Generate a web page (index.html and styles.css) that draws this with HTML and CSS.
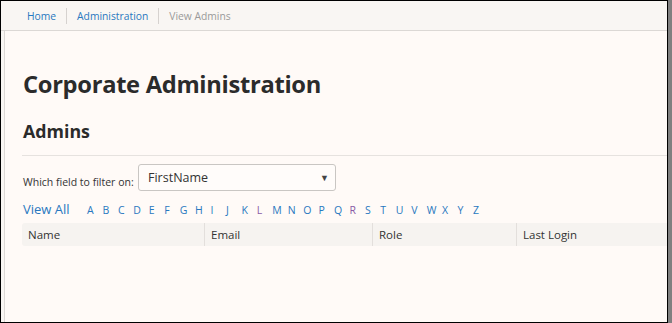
FILE: index.html
```html
<!DOCTYPE html>
<html lang="en">
<head>
    <meta charset="UTF-8">
    <title>View Admins</title>
    <link rel="stylesheet" href="styles.css">
</head>
<body>
    <div class="window">
        <div class="breadcrumb">
            <a href="#" class="crumb">Home</a>
            <a href="#" class="crumb">Administration</a>
            <span class="crumb current">View Admins</span>
        </div>
        <div class="content">
            <h1>Corporate Administration</h1>
            <h2>Admins</h2>
            <hr>
            <div class="filter-row">
                <label for="filterField">Which field to filter on:</label>
                <div class="select-box">
                    <span>FirstName</span>
                    <span class="arrow">&#9660;</span>
                </div>
            </div>
            <div class="letters">
                <a href="#" class="view-all">View All</a>
                <a href="#">A</a><a href="#">B</a><a href="#">C</a><a href="#">D</a><a href="#">E</a><a href="#">F</a><a href="#">G</a><a href="#">H</a><a href="#">I</a><a href="#">J</a><a href="#">K</a><a href="#" class="visited">L</a><a href="#">M</a><a href="#">N</a><a href="#">O</a><a href="#">P</a><a href="#">Q</a><a href="#" class="visited">R</a><a href="#">S</a><a href="#">T</a><a href="#">U</a><a href="#">V</a><a href="#">W</a><a href="#">X</a><a href="#">Y</a><a href="#">Z</a>
            </div>
            <div class="table-head">
                <div class="col col-name">Name</div>
                <div class="col col-email">Email</div>
                <div class="col col-role">Role</div>
                <div class="col col-login">Last Login</div>
            </div>
        </div>
    </div>
</body>
</html>
```

FILE: styles.css
```css
html, body {
    margin: 0;
    padding: 0;
}
body {
    background-color: #808080;
    font-family: 'Open Sans', sans-serif;
    color: #333;
}
.window {
    width: 666px;
    height: 321px;
    border: 1px solid #000;
    background-color: #f9f6f3;
    display: flex;
    flex-direction: column;
    overflow: hidden;
}
.breadcrumb {
    height: 29px;
    border-bottom: 1px solid #dcd8d5;
    display: flex;
    align-items: center;
    padding-left: 16px;
    font-size: 10.3px;
}
.crumb {
    padding: 0 10px;
    line-height: 16px;
    border-left: 1px solid #d6d2cf;
    color: #2878c0;
    text-decoration: none;
}
.crumb:first-child {
    border-left: none;
}
.crumb.current {
    color: #9a9a9a;
}
.content {
    flex: 1;
    margin-left: 3px;
    border-left: 1px solid #dcd8d5;
    background-color: #fffaf7;
    padding: 0 0 0 18px;
}
h1 {
    margin: 38px 0 0;
    font-size: 23.7px;
    font-weight: bold;
    letter-spacing: -0.3px;
    line-height: 30px;
    color: #2b2b2b;
}
h2 {
    margin: 21px 0 0;
    font-size: 17.8px;
    font-weight: bold;
    line-height: 22px;
    color: #2b2b2b;
}
hr {
    margin: 13px 0 0 -1px;
    border: none;
    border-top: 1px solid #e6e2df;
}
.filter-row {
    display: flex;
    align-items: center;
    margin-top: 8px;
    font-size: 10.5px;
}
.filter-row label {
    margin-top: 8px;
    width: 115px;
}
.select-box {
    width: 181px;
    height: 25px;
    border: 1px solid #c9c6c3;
    border-radius: 3px;
    background-color: #fffcfa;
    display: flex;
    align-items: center;
    justify-content: space-between;
    padding: 0 6px 0 9px;
    font-size: 12.5px;
}
.arrow {
    font-size: 9px;
    color: #444;
}
.letters {
    display: flex;
    align-items: baseline;
    margin-top: 9px;
    height: 20px;
}
.letters a {
    color: #2878c0;
    text-decoration: none;
    font-size: 10.5px;
    width: 15.45px;
}
.letters a.visited {
    color: #8a5aa6;
}
.letters a.view-all {
    font-size: 13px;
    width: 64px;
}
.table-head {
    display: flex;
    height: 23px;
    margin-top: 3px;
    margin-left: -1px;
    background-color: #f6f3f0;
    border-radius: 3px 0 0 3px;
    font-size: 11.5px;
}
.col {
    padding-left: 6px;
    line-height: 23px;
    border-left: 1px solid #e3dfdc;
}
.col-name {
    width: 176px;
    border-left: none;
}
.col-email {
    width: 161px;
}
.col-role {
    width: 137px;
}
.col-login {
    flex: 1;
}
```
